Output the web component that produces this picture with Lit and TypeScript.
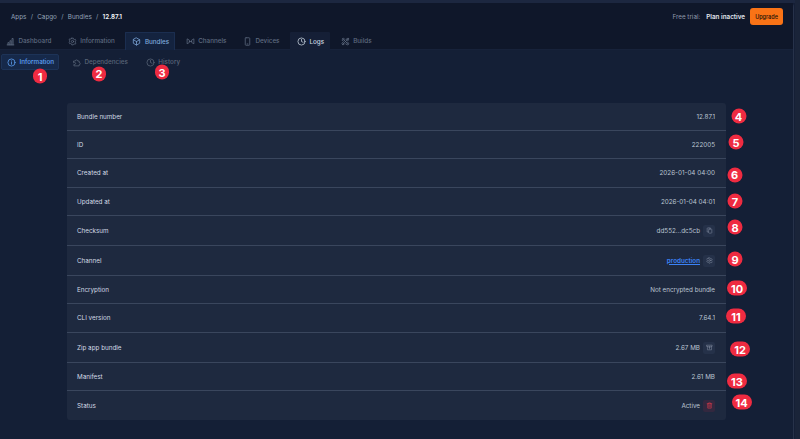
import { LitElement, html, css, svg } from "lit";
import { customElement } from "lit/decorators.js";

const ic = (body: unknown, cls = "ic") => html`<svg class=${cls} viewBox="0 0 24 24" fill="none" stroke="currentColor" stroke-width="2" stroke-linecap="round" stroke-linejoin="round">${body}</svg>`;

const icons: Record<string, unknown> = {
  chart: svg`<path d="M3 21h18M5 21v-6h3v6M10.500 21V10h3v11M16 21V4h3v17"/>`,
  gear: svg`<circle cx="12" cy="12" r="3"/><path d="M10 3h4l.6 2.600 2.300 1.300 2.500-.8 2 3.500-2 1.800v2.600l2 1.800-2 3.500-2.500-.8-2.300 1.300L14 21h-4l-.6-2.600-2.300-1.300-2.500.8-2-3.500 2-1.800v-2.600l-2-1.800 2-3.500 2.500.8 2.300-1.300z"/>`,
  cube: svg`<path d="M12 2.500l8.500 4.800v9.400L12 21.500l-8.500-4.800V7.300z"/><path d="M3.500 7.300L12 12l8.500-4.700M12 12v9.500"/>`,
  channels: svg`<path d="M3 6v12l6-3.500v-5zM21 6v12l-6-3.500v-5zM9 12h6"/>`,
  phone: svg`<rect x="6" y="2" width="12" height="20" rx="2"/><path d="M11 18.500h2"/>`,
  clock: svg`<circle cx="12" cy="12" r="9.500"/><path d="M12 6.500V12l4 2"/>`,
  tools: svg`<path d="M4 4l16 16M20 4L4 20M3 7l4-4 4 4-4 4zM13 17l4-4 4 4-4 4zM15 5l4-2 2 2-2 4zM5 15l4 4-4 2-2-2z"/>`,
  info: svg`<circle cx="12" cy="12" r="9.500"/><path d="M12 11v5.500M12 7.500v.3"/>`,
  puzzle: svg`<path d="M5 8h4a3 3 0 1 1 6 0h4v4a3 3 0 1 1 0 6v3H5v-4a3 3 0 1 0 0-5z"/>`,
  copy: svg`<rect x="9" y="7" width="11" height="14" rx="2"/><path d="M15 7V3H6a2 2 0 0 0-2 2v12h5"/>`,
  archive: svg`<path d="M3 4h18v4H3zM5 8v12h14V8M12 8v9M10 12h4"/>`,
  trash: svg`<path d="M4 6h16M9 6V3h6v3M6 6v15h12V6M10 10v7M14 10v7"/>`,
};

const tabs = [
  ["Dashboard", "chart", 0],
  ["Information", "gear", 0],
  ["Bundles", "cube", 1],
  ["Channels", "channels", 0],
  ["Devices", "phone", 0],
  ["Logs", "clock", 2],
  ["Builds", "tools", 0],
] as const;

const rows: { label: string; value?: string; link?: string; icon?: string; danger?: boolean; h: number }[] = [
  { label: "Bundle number", value: "12.87.1", h: 28 },
  { label: "ID", value: "222005", h: 28 },
  { label: "Created at", value: "2026-01-04 04:00", h: 29 },
  { label: "Updated at", value: "2026-01-04 04:01", h: 28 },
  { label: "Checksum", value: "dd552...dc5cb", icon: "copy", h: 30 },
  { label: "Channel", link: "production", icon: "gear", h: 30 },
  { label: "Encryption", value: "Not encrypted bundle", h: 28 },
  { label: "CLI version", value: "7.64.1", h: 29 },
  { label: "Zip app bundle", value: "2.67 MB", icon: "archive", h: 30 },
  { label: "Manifest", value: "2.61 MB", h: 28 },
  { label: "Status", value: "Active", icon: "trash", danger: true, h: 29 },
];

const badges: [string, number, number, number][] = [
  ["1", 40, 76, 14], ["2", 99, 73.500, 14], ["3", 162, 72, 14], ["4", 738.500, 116, 15],
  ["5", 736, 142, 15], ["6", 734.500, 174.500, 15], ["7", 735, 201, 15], ["8", 735, 227, 15],
  ["9", 735, 259, 15], ["10", 737, 288, 20], ["11", 736, 316, 20], ["12", 740, 349, 20],
  ["13", 737, 381, 20], ["14", 741.500, 402, 20],
];

@customElement("app-root")
export class AppRoot extends LitElement {
  static styles = css`
    :host { display: block; position: relative; width: 800px; height: 439px; overflow: hidden;
      background: #151f36; font-family: Inter, "Noto Sans", sans-serif; font-size: 6.300px; color: #cbd5e1; }
    * { box-sizing: border-box; }
    .frame { height: 439px; margin: 3px 6px 0 0; border-right: 1px solid #27324a; background: #141f36; border-top-right-radius: 4px; display: flex; flex-direction: column; }
    .strip { position: absolute; inset: 0 0 auto 0; height: 3px; background: #1c2740; }
    .edge { position: absolute; right: 0; top: 0; bottom: 0; width: 5px; background: #1a2439; }
    header { height: 47px; background: #0f172a; border-bottom: 1px solid #17223a; display: flex; flex-direction: column; flex: none; }
    .top { height: 27px; flex: none; display: flex; align-items: center; justify-content: space-between; padding: 0 10px 0 11px; }
    .crumbs { display: flex; gap: 4.300px; color: #94a3b8; }
    .crumbs b { color: #f1f5f9; font-weight: 600; }
    .plan { display: flex; align-items: center; color: #8f99aa; }
    .plan b { color: #e2e8f0; font-weight: 600; margin: 0 5px 0 6px; }
    .upgrade { height: 17px; width: 33px; border-radius: 3px; background: #f97316; color: #1a0f08; font-size: 5.500px; font-weight: 500; display: flex; align-items: center; justify-content: center; }
    .tabs { display: flex; gap: 4.500px; height: 18px; margin-top: 2px; padding-left: 6px; flex: none; }
    .tab { display: flex; align-items: center; gap: 3.500px; height: 100%; padding: 0 6px; color: #5f6b80; font-weight: 500; white-space: nowrap; border-radius: 1px 1px 0 0; }
    .tab .ic { width: 9px; height: 9px; }
    .tab.first { padding-left: 0; }
    .tab.on { background: #14233f; color: #7fa9dc; border: 1px solid #1b2e50; border-bottom: 0; padding: 0 5px 0 6px; }
    .tab.log { background: #151f36; color: #cbd5e1; border-color: transparent; }
    .ic { flex: none; }
    .sub { display: flex; align-items: center; height: 16px; margin-top: 4px; padding-left: 1px; flex: none; font-weight: 500; color: #5a6578; line-height: 1; }
    .subitem { display: flex; align-items: center; gap: 3.500px; height: 100%; padding: 0 6px; }
    .subitem .ic { width: 9px; height: 9px; }
    .subitem.on { background: #16294a; border: 1px solid #1d3357; border-radius: 2px; color: #60a5fa; padding: 0 5px; width: 58px; margin-right: 13px; }
    .subitem.dep { margin-right: 6px; padding-left: 0; }
    .main { flex: 1; padding: 33px 67px 0 67px; }
    .card { background: #1e293f; border-radius: 3px; }
    .row { display: flex; align-items: center; justify-content: space-between; padding: 0 11px 0 10px; border-bottom: 1px solid #3a465d; }
    .row:last-child { border-bottom: 0; }
    .label { color: #d3dae5; }
    .val { display: flex; align-items: center; gap: 3px; color: #bcc5d3; }
    .val a { color: #3b82f6; font-weight: 600; text-decoration: underline; }
    .btn { width: 12px; height: 12px; border-radius: 2px; background: #253149; color: #7c879b; display: flex; align-items: center; justify-content: center; }
    .btn .ic { width: 7px; height: 7px; }
    .btn.danger { background: #33283f; color: #dc3c4c; }
    .badge { position: absolute; height: 15px; transform: translate(-50%, -50%); background: #ef2b41; color: #fff; border-radius: 8px; font-size: 11px; font-weight: 700; display: flex; align-items: center; justify-content: center; }
  `;

  render() {
    return html`
      <div class="strip"></div>
      <div class="edge"></div>
      <div class="frame">
        <header>
          <div class="top">
            <div class="crumbs"><span>Apps</span><span>/</span><span>Capgo</span><span>/</span><span>Bundles</span><span>/</span><b>12.87.1</b></div>
            <div class="plan"><span>Free trial:</span><b>Plan inactive</b><div class="upgrade">Upgrade</div></div>
          </div>
          <nav class="tabs">
            ${tabs.map(([t, i, s], idx) => html`<div class="tab ${s === 1 ? "on" : s === 2 ? "on log" : ""} ${idx === 0 ? "first" : ""}">${ic(icons[i])}${t}</div>`)}
          </nav>
        </header>
        <div class="sub">
          <div class="subitem on">${ic(icons.info)}Information</div>
          <div class="subitem dep">${ic(icons.puzzle)}Dependencies</div>
          <div class="subitem">${ic(icons.clock)}History</div>
        </div>
        <div class="main">
          <div class="card">
            ${rows.map((r) => html`<div class="row" style="height:${r.h}px">
              <span class="label">${r.label}</span>
              <span class="val">
                ${r.value ? html`<span>${r.value}</span>` : ""}
                ${r.link ? html`<a>${r.link}</a>` : ""}
                ${r.icon ? html`<span class="btn ${r.danger ? "danger" : ""}">${ic(icons[r.icon])}</span>` : ""}
              </span>
            </div>`)}
          </div>
        </div>
      </div>
      ${badges.map(([n, x, y, w]) => html`<div class="badge" style="left:${x}px;top:${y}px;width:${w}px">${n}</div>`)}
    `;
  }
}
